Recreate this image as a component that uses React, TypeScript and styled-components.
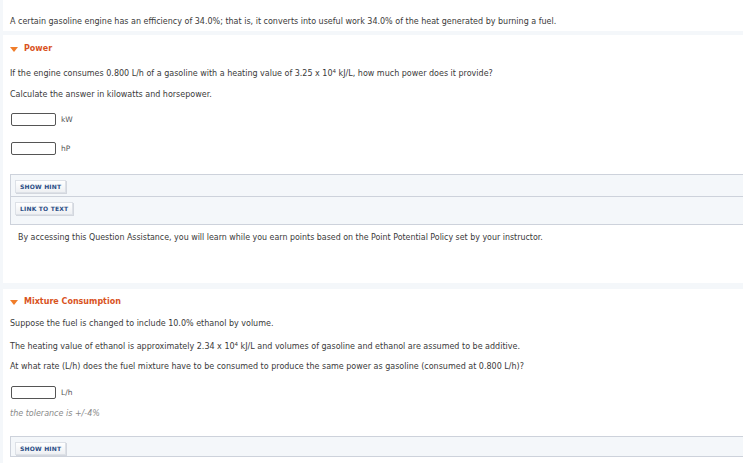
import React from "react";
import styled, { createGlobalStyle } from "styled-components";

const Global = createGlobalStyle`
  html, body { margin: 0; padding: 0; background: #f4f7fa; overflow: hidden; }
  body { font-family: "DejaVu Sans", Verdana, sans-serif; color: #3a3a3a; }
`;

const Page = styled.div`
  width: 780px;
  padding-left: 3px;
  display: flex;
  flex-direction: column;
`;

const Panel = styled.div<{ $h: number; $gap?: number }>`
  background: #ffffff;
  height: ${(p) => p.$h}px;
  margin-bottom: ${(p) => p.$gap ?? 0}px;
  padding: 0 0 0 7px;
  box-sizing: border-box;
  display: flex;
  flex-direction: column;
`;

const Text = styled.p<{ $top: number }>`
  margin: ${(p) => p.$top}px 0 0 0;
  font-size: 8px;
  line-height: 10px;
  white-space: nowrap;
  sup { font-size: 5.5px; line-height: 0; vertical-align: 3px; }
`;

const Title = styled.div<{ $top: number }>`
  margin-top: ${(p) => p.$top}px;
  display: flex;
  align-items: center;
  gap: 6px;
  font-size: 8px;
  line-height: 10px;
  font-weight: bold;
  color: #d9531e;
`;

const Caret = styled.span`
  width: 0;
  height: 0;
  border-left: 4px solid transparent;
  border-right: 4px solid transparent;
  border-top: 5px solid #f07d2a;
`;

const AnswerRow = styled.div<{ $top: number }>`
  margin-top: ${(p) => p.$top}px;
  margin-left: 1px;
  display: flex;
  align-items: center;
  gap: 5px;
  font-size: 7.5px;
  color: #555;
`;

const Input = styled.div`
  width: 43px;
  height: 11px;
  border: 1px solid #555;
  border-radius: 2px;
  background: #fff;
`;

const Tolerance = styled.div<{ $top: number }>`
  margin-top: ${(p) => p.$top}px;
  font-size: 8px;
  line-height: 10px;
  font-style: italic;
  color: #8a8a8a;
`;

const HintBox = styled.div<{ $top: number }>`
  margin-top: ${(p) => p.$top}px;
  background: #f4f7fa;
  border: 1px solid #cdd2db;
  border-right: none;
  display: flex;
  flex-direction: column;
`;

const HintRow = styled.div<{ $h: number; $last?: boolean }>`
  height: ${(p) => p.$h}px;
  padding: 5px 0 0 4px;
  box-sizing: border-box;
  display: flex;
  align-items: flex-start;
  border-bottom: ${(p) => (p.$last ? "none" : "1px solid #cdd2db")};
`;

const HintButton = styled.span`
  display: block;
  padding: 0 4px;
  height: 11px;
  line-height: 11px;
  background: linear-gradient(#ffffff, #eef0f3);
  border: 1px solid #dde1e7;
  box-shadow: 1px 1px 0 #d3d7de;
  font-size: 6px;
  font-weight: bold;
  letter-spacing: 0.2px;
  color: #2a4d86;
`;

const Notice = styled.p`
  margin: 7px 0 0 8px;
  font-family: "DejaVu Sans Condensed", "Liberation Sans Narrow", "Liberation Sans", sans-serif;
  font-size: 8.8px;
  line-height: 10px;
  color: #3a3a3a;
  white-space: nowrap;
`;

export default function App() {
  return (
    <>
      <Global />
      <Page>
        <Panel $h={31} $gap={4}>
          <Text $top={17}>
            A certain gasoline engine has an efficiency of 34.0%; that is, it converts into useful work 34.0% of the heat generated by burning a fuel.
          </Text>
        </Panel>
        <Panel $h={248} $gap={6}>
          <Title $top={9}>
            <Caret />
            Power
          </Title>
          <Text $top={15}>
            If the engine consumes 0.800 L/h of a gasoline with a heating value of 3.25 x 10<sup>4</sup> kJ/L, how much power does it provide?
          </Text>
          <Text $top={11}>Calculate the answer in kilowatts and horsepower.</Text>
          <AnswerRow $top={13}>
            <Input />
            kW
          </AnswerRow>
          <AnswerRow $top={16}>
            <Input />
            hP
          </AnswerRow>
          <HintBox $top={19}>
            <HintRow $h={22}>
              <HintButton>SHOW HINT</HintButton>
            </HintRow>
            <HintRow $h={27} $last>
              <HintButton>LINK TO TEXT</HintButton>
            </HintRow>
          </HintBox>
          <Notice>
            By accessing this Question Assistance, you will learn while you earn points based on the Point Potential Policy set by your instructor.
          </Notice>
        </Panel>
        <Panel $h={200}>
          <Title $top={8}>
            <Caret />
            Mixture Consumption
          </Title>
          <Text $top={12}>Suppose the fuel is changed to include 10.0% ethanol by volume.</Text>
          <Text $top={13}>
            The heating value of ethanol is approximately 2.34 x 10<sup>4</sup> kJ/L and volumes of gasoline and ethanol are assumed to be additive.
          </Text>
          <Text $top={10}>
            At what rate (L/h) does the fuel mixture have to be consumed to produce the same power as gasoline (consumed at 0.800 L/h)?
          </Text>
          <AnswerRow $top={14}>
            <Input />
            L/h
          </AnswerRow>
          <Tolerance $top={10}>the tolerance is +/-4%</Tolerance>
          <HintBox $top={17}>
            <HintRow $h={19} $last>
              <HintButton>SHOW HINT</HintButton>
            </HintRow>
          </HintBox>
        </Panel>
      </Page>
    </>
  );
}
